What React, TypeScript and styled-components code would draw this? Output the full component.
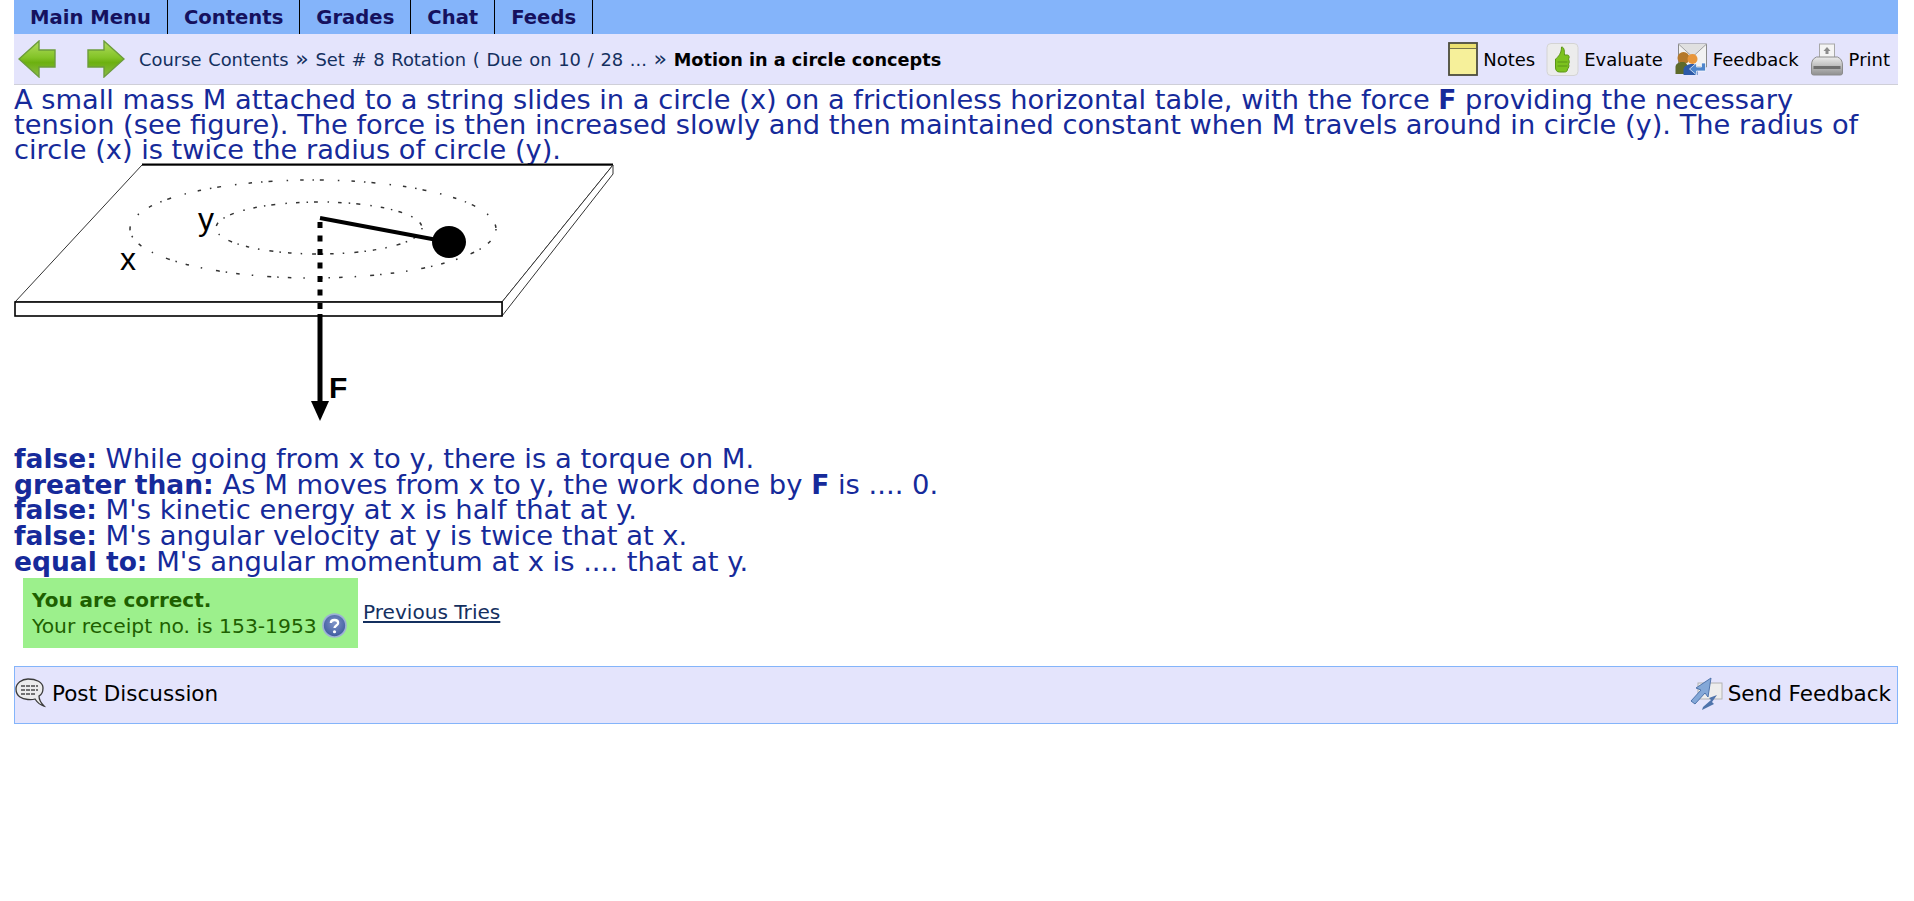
import React from 'react';
import styled, { createGlobalStyle } from 'styled-components';

const GlobalStyle = createGlobalStyle`
  html, body {
    margin: 0;
    padding: 0;
    background: #ffffff;
    font-family: "DejaVu Sans", Verdana, sans-serif;
  }
`;

const Page = styled.div`
  margin: 0 16px 0 14px;
`;

const MenuBar = styled.nav`
  display: flex;
  height: 34px;
  background: #84b4fa;
`;

const MenuItem = styled.a`
  display: flex;
  align-items: center;
  padding: 0 16px;
  border-right: 1px solid #000;
  color: #15115e;
  font-size: 19.6px;
  font-weight: 700;
`;

const CrumbBar = styled.div`
  display: flex;
  align-items: center;
  justify-content: space-between;
  height: 51px;
  box-sizing: border-box;
  background: #e4e4fc;
  border-bottom: 1px solid #cfcfd8;
`;

const CrumbLeft = styled.div`
  display: flex;
  align-items: center;
`;

const ArrowLink = styled.a`
  display: flex;
  width: 38px;
  height: 38px;
  margin-left: 4px;
  margin-right: 27px;
`;

const Crumbs = styled.div`
  font-size: 17.9px;
  word-spacing: 1px;
  color: #14305f;
  white-space: nowrap;
  margin-left: -13px;
`;

const Sep = styled.span`
  font-size: 22px;
  line-height: 18px;
  color: #14305f;
`;

const Current = styled.b`
  color: #000;
  font-size: 17.7px;
  word-spacing: 0;
`;

const Tools = styled.div`
  display: flex;
  align-items: center;
  gap: 11px;
  padding-right: 8px;
`;

const Tool = styled.a`
  display: flex;
  align-items: center;
  gap: 5px;
  font-size: 18px;
  color: #000;
`;

const Question = styled.p`
  margin: 2px 0 0;
  padding-right: 8px;
  font-size: 27.25px;
  line-height: 25px;
  color: #162a9a;

  b {
    font-size: 26.5px;
  }
`;

const Figure = styled.svg`
  display: block;
  width: 610px;
  height: 280px;
  margin-top: 1px;
`;

const Answers = styled.div`
  margin-top: 3px;
  font-size: 27.4px;
  line-height: 25.7px;
  color: #162a9a;

  b {
    font-size: 26.5px;
  }
`;

const ResultRow = styled.div`
  display: flex;
  align-items: flex-start;
  margin: 3px 0 18px 9px;
`;

const ResultBox = styled.div`
  width: 335px;
  height: 70px;
  box-sizing: border-box;
  padding: 9px 9px;
  background: #9cf08c;
  color: #1e6000;
  font-size: 20.3px;
  line-height: 26px;

  b {
    font-size: 20px;
  }
`;

const ReceiptLine = styled.div`
  display: flex;
  align-items: center;
  gap: 5px;
  white-space: nowrap;
`;

const TriesLink = styled.a`
  margin: 22px 0 0 5px;
  font-size: 20.1px;
  color: #14305f;
  text-decoration: underline;
`;

const FooterBar = styled.div`
  display: flex;
  align-items: center;
  justify-content: space-between;
  height: 58px;
  box-sizing: border-box;
  background: #e4e4fc;
  border: 1px solid #84b4fa;
  padding: 0 6px 3px 0;
  font-size: 21.5px;
  color: #000;
`;

const FooterLink = styled.a`
  display: flex;
  align-items: center;
  gap: 5px;
`;

const ArrowFill = ({ id }: { id: string }) => (
  <defs>
    <linearGradient id={id} x1="0" y1="0" x2="0" y2="1">
      <stop offset="0" stopColor="#b2dc60" />
      <stop offset="0.45" stopColor="#84c428" />
      <stop offset="0.6" stopColor="#6cb010" />
      <stop offset="1" stopColor="#8cbc48" />
    </linearGradient>
  </defs>
);

const BackArrow = () => (
  <svg width="38" height="38" viewBox="0 0 38 38">
    <ArrowFill id="backFill" />
    <path d="M21 1 L1 19 L21 37 V27 H37 V10 H21 Z" fill="url(#backFill)" stroke="#6c9c3c" strokeWidth="1.4" />
  </svg>
);

const NextArrow = () => (
  <svg width="38" height="38" viewBox="0 0 38 38">
    <ArrowFill id="nextFill" />
    <path d="M17 1 L37 19 L17 37 V27 H1 V10 H17 Z" fill="url(#nextFill)" stroke="#6c9c3c" strokeWidth="1.4" />
  </svg>
);

const NoteIcon = () => (
  <svg width="30" height="34" viewBox="0 0 30 34">
    <rect x="1" y="1" width="28" height="32" fill="#f6f09a" stroke="#4c4c3c" strokeWidth="1.8" />
    <rect x="2" y="2" width="26" height="4" fill="#ebe070" />
    <line x1="2" y1="6.5" x2="28" y2="6.5" stroke="#77754a" />
  </svg>
);

const ThumbIcon = () => (
  <svg width="33" height="33" viewBox="0 0 32 33">
    <rect x="0.5" y="0.5" width="31" height="32" rx="4" fill="#ececec" stroke="#d4d4d4" />
    <path d="M15 4 C18 4 18 9 18 12 H21 C23 12 23 15 22 16 C23 18 23 20 22 21 C23 23 22 25 21 26 C21 28 20 29 18 29 H13 C10 29 9 27 9 24 V16 C12 14 15 10 15 4 Z" fill="#7cc21e" stroke="#5b9416" />
    <path d="M11 19 H21 M11 23 H21" stroke="#5b9416" />
  </svg>
);

const FeedbackIcon = () => (
  <svg width="34" height="33" viewBox="0 0 33 33">
    <path d="M4 1 H32 V24 H4 Z" fill="#f2f2f2" stroke="#8a8a8a" />
    <path d="M4 1 L18 14 L32 1" fill="#e0e0e0" stroke="#a0a0a0" />
    <circle cx="9" cy="15" r="6" fill="#b4792a" />
    <circle cx="18" cy="16" r="5" fill="#e8963a" />
    <path d="M1 31 V24 C1 21 4 19 8 19 C11 19 13 21 13 24 V31 Z" fill="#5d6a2a" />
    <path d="M9 32 V26 C9 23 14 21 18 21 C21 21 23 23 23 26 V32 Z" fill="#2d5aa8" />
    <path d="M31 20 V28 H22 V32 L15 26 L22 20 V24 H27 V20 Z" fill="#4f86cc" stroke="#fff" strokeWidth="0.7" />
  </svg>
);

const PrinterIcon = () => (
  <svg width="34" height="33" viewBox="0 0 33 33">
    <defs>
      <linearGradient id="printerBody" x1="0" y1="0" x2="0" y2="1">
        <stop offset="0" stopColor="#ececec" />
        <stop offset="1" stopColor="#8f8f8f" />
      </linearGradient>
    </defs>
    <rect x="9" y="1" width="15" height="15" fill="#f4f4f4" stroke="#a8a8a8" />
    <path d="M16.5 4 L20 8 H18 V11 H15 V8 H13 Z" fill="#8c8c8c" />
    <path d="M6 14 H27 Q32 16 32 22 V30 Q32 32 30 32 H3 Q1 32 1 30 V22 Q1 16 6 14 Z" fill="url(#printerBody)" stroke="#8c8c8c" />
    <rect x="3" y="23" width="27" height="3" fill="#6f6f6f" />
  </svg>
);

const HelpIcon = () => (
  <svg width="25" height="25" viewBox="0 0 24 24">
    <defs>
      <radialGradient id="helpFill" cx="0.5" cy="0.4" r="0.6">
        <stop offset="0" stopColor="#7f93c8" />
        <stop offset="1" stopColor="#3d5a9e" />
      </radialGradient>
    </defs>
    <circle cx="12" cy="12" r="11" fill="url(#helpFill)" stroke="#9db0d6" strokeWidth="1.6" />
    <path d="M8.5 9.5 C8.5 5.8 15.5 5.8 15.5 9.5 C15.5 12 12 12 12 14.5" fill="none" stroke="#fff" strokeWidth="2.2" />
    <circle cx="12" cy="18" r="1.5" fill="#fff" />
  </svg>
);

const ChatIcon = () => (
  <svg width="32" height="32" viewBox="0 0 32 32">
    <path d="M13 2 C21 2 28 5 28 11 C28 15 26 18 24 19 C24 22 26 26 29 29 C25 28 22 25 20 22 C17 23 9 23 5 20 C2 18 1 15 1 12 C1 6 7 2 13 2 Z" fill="#ececec" stroke="#3a3a3a" strokeWidth="1.3" />
    <path d="M6 9 H23 M6 13 H23 M6 17 H20" stroke="#4a4a4a" strokeWidth="1.5" strokeDasharray="4 1" />
  </svg>
);

const SendIcon = () => (
  <svg width="33" height="33" viewBox="0 0 33 33">
    <rect x="8" y="6" width="24" height="16" fill="#ededed" stroke="#b2b2b2" />
    <path d="M21 1 L6 11 L11 13 L1 24 L5 27 L15 16 L18 20 Z" fill="#84a8d8" stroke="#4f74ac" />
    <path d="M27 18 L19 21 L21 23 L13 30 L12 33 L24 27 L22 25 Z" fill="#4f74ac" />
  </svg>
);

// the table sketch from the question
const TableFigure = () => (
  <Figure viewBox="14 163 610 280">
    <path d="M142 165 H613 L502 302 H15 Z" fill="#fff" stroke="#333" strokeWidth="1" />
    <line x1="142" y1="164.5" x2="613" y2="164.5" stroke="#000" strokeWidth="2" />
    <path d="M613 165 V174 L502 316 V302 Z" fill="#fff" stroke="#333" strokeWidth="1" />
    <rect x="15" y="302" width="487" height="14" fill="#fff" stroke="#000" strokeWidth="1.6" />
    <ellipse cx="313" cy="229" rx="183" ry="49" fill="none" stroke="#333" strokeWidth="1.5" strokeDasharray="1.5 12 3.5 9 1.5 6 4 14" />
    <ellipse cx="319" cy="228" rx="103" ry="26" fill="none" stroke="#333" strokeWidth="1.5" strokeDasharray="1.5 9 3.5 7 1.5 6 4 10" />
    <line x1="320" y1="218" x2="448" y2="242" stroke="#000" strokeWidth="4" />
    <ellipse cx="449" cy="242" rx="17" ry="16" fill="#000" />
    <line x1="320" y1="222" x2="320" y2="316" stroke="#000" strokeWidth="5" strokeDasharray="6 7.5" />
    <line x1="320" y1="314" x2="320" y2="404" stroke="#000" strokeWidth="5" />
    <path d="M311 401 H329 L320 421 Z" fill="#000" />
    <text x="329" y="398" fontFamily="Liberation Sans, sans-serif" fontWeight="700" fontSize="30" fill="#000">F</text>
    <text x="120" y="270" fontFamily="Liberation Sans, sans-serif" fontSize="32" fill="#000">x</text>
    <text x="198" y="230" fontFamily="Liberation Sans, sans-serif" fontSize="32" fill="#000">y</text>
  </Figure>
);

const App = () => {
  return (
    <Page>
      <GlobalStyle />
      <MenuBar>
        <MenuItem>Main Menu</MenuItem>
        <MenuItem>Contents</MenuItem>
        <MenuItem>Grades</MenuItem>
        <MenuItem>Chat</MenuItem>
        <MenuItem>Feeds</MenuItem>
      </MenuBar>
      <CrumbBar>
        <CrumbLeft>
          <ArrowLink><BackArrow /></ArrowLink>
          <ArrowLink><NextArrow /></ArrowLink>
          <Crumbs>
            Course Contents <Sep>»</Sep> Set # 8 Rotation ( Due on 10 / 28 ... <Sep>»</Sep> <Current>Motion in a circle concepts</Current>
          </Crumbs>
        </CrumbLeft>
        <Tools>
          <Tool><NoteIcon />Notes</Tool>
          <Tool><ThumbIcon />Evaluate</Tool>
          <Tool><FeedbackIcon />Feedback</Tool>
          <Tool><PrinterIcon />Print</Tool>
        </Tools>
      </CrumbBar>
      <Question>
        A small mass M attached to a string slides in a circle (x) on a frictionless horizontal table, with the force <b>F</b> providing the necessary tension (see figure). The force is then increased slowly and then maintained constant when M travels around in circle (y). The radius of circle (x) is twice the radius of circle (y).
      </Question>
      <TableFigure />
      <Answers>
        <div><b>false:</b> While going from x to y, there is a torque on M.</div>
        <div><b>greater than:</b> As M moves from x to y, the work done by <b>F</b> is .... 0.</div>
        <div><b>false:</b> M's kinetic energy at x is half that at y.</div>
        <div><b>false:</b> M's angular velocity at y is twice that at x.</div>
        <div><b>equal to:</b> M's angular momentum at x is .... that at y.</div>
      </Answers>
      <ResultRow>
        <ResultBox>
          <b>You are correct.</b>
          <ReceiptLine>Your receipt no. is 153-1953 <HelpIcon /></ReceiptLine>
        </ResultBox>
        <TriesLink>Previous Tries</TriesLink>
      </ResultRow>
      <FooterBar>
        <FooterLink><ChatIcon />Post Discussion</FooterLink>
        <FooterLink><SendIcon />Send Feedback</FooterLink>
      </FooterBar>
    </Page>
  );
};

export default App;
